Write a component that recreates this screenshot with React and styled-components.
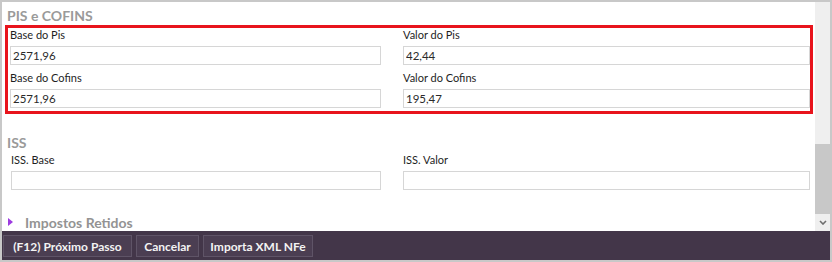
import React from "react";
import styled, { createGlobalStyle } from "styled-components";

const GlobalStyle = createGlobalStyle`
    body {
        margin: 0;
        font-family: Lato, "Open Sans", sans-serif;
        background: #fff;
    }
`;

const Frame = styled.div`
    width: 832px;
    height: 262px;
    box-sizing: border-box;
    border: 2px solid #c8c8c8;
    display: flex;
    flex-direction: column;
`;

const Body = styled.div`
    display: flex;
    height: 229px;
    overflow: hidden;
`;

const Main = styled.div`
    flex: 1;
    overflow: hidden;
`;

const SectionTitle = styled.div`
    font-size: 14px;
    font-weight: 700;
    line-height: 16px;
    color: #9a9a9a;
    padding-left: 5px;
    margin-top: ${({ top }) => top}px;
    margin-bottom: ${({ bottom }) => bottom}px;
`;

const Highlight = styled.div`
    margin: 0 2px 0 3px;
    border: 3px solid #e8141c;
    padding: 0 0 3px 2px;
`;

const FieldGrid = styled.div`
    display: grid;
    grid-template-columns: ${({ first }) => first}px 1fr;
    row-gap: 6px;
    padding: ${({ pad }) => pad};
`;

const Field = styled.div`
    display: flex;
    flex-direction: column;
`;

const Label = styled.label`
    font-size: 11px;
    line-height: 14px;
    height: 18px;
    color: #1e1e1e;
`;

const Input = styled.input`
    box-sizing: border-box;
    width: ${({ w }) => (w ? `${w}px` : "100%")};
    height: 19px;
    border: 1px solid #d6d6d6;
    padding: 0 2px;
    margin: 0;
    font-family: Lato, "Open Sans", sans-serif;
    font-size: 11.5px;
    color: #2a2a2a;
    background: #fff;
    outline: none;
`;

const Collapsed = styled.div`
    display: flex;
    align-items: flex-start;
    margin-top: 25px;
    padding-left: 6px;
    gap: 12px;
    font-size: 14px;
    font-weight: 700;
    line-height: 16px;
    color: #939393;
`;

const Caret = styled.svg`
    margin-top: 3px;
    flex: none;
`;

const Scrollbar = styled.div`
    width: 15px;
    display: flex;
    flex-direction: column;
    background: #efefef;
`;

const Track = styled.div`
    height: ${({ h }) => h}px;
    background: ${({ thumb }) => (thumb ? "#c8c8c8" : "#efefef")};
`;

const ArrowButton = styled.div`
    flex: 1;
    display: flex;
    align-items: center;
    justify-content: center;
`;

const Footer = styled.div`
    height: 29px;
    box-sizing: border-box;
    background: #433649;
    padding: 4px 1px 3px;
    display: flex;
    gap: 4px;
`;

const Button = styled.button`
    box-sizing: border-box;
    width: ${({ w }) => w}px;
    height: 22px;
    background: #4b3e52;
    border: 1px solid #5f5467;
    color: #f3f3f3;
    font-family: Lato, "Open Sans", sans-serif;
    font-size: 12px;
    font-weight: 700;
    padding: 0;
    cursor: pointer;
`;

const TextField = ({ label, value, w }) => (
    <Field>
        <Label>{label}</Label>
        <Input readOnly value={value} w={w} />
    </Field>
);

const App = () => {
    return (
        <>
            <GlobalStyle />
            <Frame>
                <Body>
                    <Main>
                        <SectionTitle top={6} bottom={1}>PIS e COFINS</SectionTitle>
                        <Highlight>
                            <FieldGrid first={393} pad="0">
                                <TextField label="Base do Pis" value="2571,96" w={371} />
                                <TextField label="Valor do Pis" value="42,44" />
                                <TextField label="Base do Cofins" value="2571,96" w={371} />
                                <TextField label="Valor do Cofins" value="195,47" />
                            </FieldGrid>
                        </Highlight>

                        <SectionTitle top={21} bottom={2}>ISS</SectionTitle>
                        <FieldGrid first={392} pad="0 5px 0 9px">
                            <TextField label="ISS. Base" value="" w={370} />
                            <TextField label="ISS. Valor" value="" />
                        </FieldGrid>

                        <Collapsed>
                            <Caret width="5" height="8" viewBox="0 0 5 8">
                                <path d="M0 0 L5 4 L0 8 Z" fill="#9d3be0" />
                            </Caret>
                            Impostos Retidos
                        </Collapsed>
                    </Main>
                    <Scrollbar>
                        <Track h={142} />
                        <Track h={70} thumb />
                        <ArrowButton>
                            <svg width="8" height="5" viewBox="0 0 8 5">
                                <path d="M1 1 L4 4 L7 1" fill="none" stroke="#6e6e6e" strokeWidth="1.6" />
                            </svg>
                        </ArrowButton>
                    </Scrollbar>
                </Body>
                <Footer>
                    <Button w={129}>(F12) Próximo Passo</Button>
                    <Button w={63}>Cancelar</Button>
                    <Button w={110}>Importa XML NFe</Button>
                </Footer>
            </Frame>
        </>
    );
};

export default App;
